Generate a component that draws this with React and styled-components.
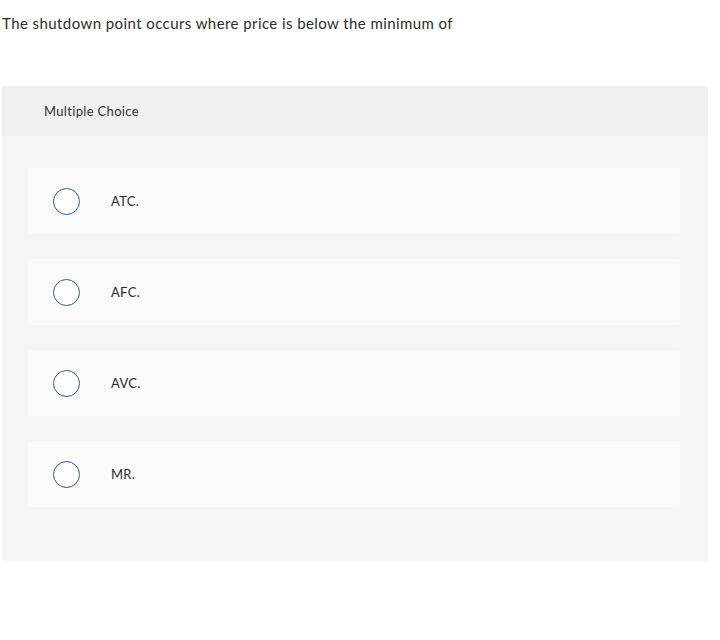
import React from 'react';
import styled, { createGlobalStyle } from 'styled-components';

const GlobalStyle = createGlobalStyle`
  body {
    margin: 0;
    background: #ffffff;
    font-family: Lato, "Open Sans", Arial, sans-serif;
    color: #333333;
  }
`;

const Page = styled.div`
  padding: 0 12px 0 2px;
`;

const Question = styled.p`
  margin: 0;
  padding-top: 14px;
  font-size: 15px;
  line-height: 18px;
  letter-spacing: 0.42px;
  color: #2c2c2c;
`;

const Panel = styled.div`
  margin-top: 54px;
  background: #f5f5f5;
  border-radius: 3px;
  overflow: hidden;
`;

const PanelHeader = styled.div`
  height: 50px;
  background: #f0f0f0;
  display: flex;
  align-items: center;
  padding-left: 42px;
  font-size: 13px;
  letter-spacing: 0.33px;
  color: #333333;
`;

const OptionList = styled.div`
  display: flex;
  flex-direction: column;
  gap: 25px;
  padding: 32px 28px 54px 26px;
`;

const Option = styled.label`
  height: 66px;
  background: #fafafa;
  border-radius: 3px;
  display: flex;
  align-items: center;
  padding-left: 25px;
  cursor: pointer;
`;

const Radio = styled.span`
  width: 25px;
  height: 25px;
  border: 1.5px solid #2d5a8a;
  border-radius: 50%;
  background: #ffffff;
  flex-shrink: 0;
`;

const OptionText = styled.span`
  margin-left: 31px;
  font-size: 13px;
  letter-spacing: 0.3px;
  color: #2c2c2c;
`;

const options = ['ATC.', 'AFC.', 'AVC.', 'MR.'];

const App = () => (
  <Page>
    <GlobalStyle />
    <Question>The shutdown point occurs where price is below the minimum of</Question>
    <Panel>
      <PanelHeader>Multiple Choice</PanelHeader>
      <OptionList>
        {options.map(o => (
          <Option key={o}>
            <Radio />
            <OptionText>{o}</OptionText>
          </Option>
        ))}
      </OptionList>
    </Panel>
  </Page>
);

export default App;
